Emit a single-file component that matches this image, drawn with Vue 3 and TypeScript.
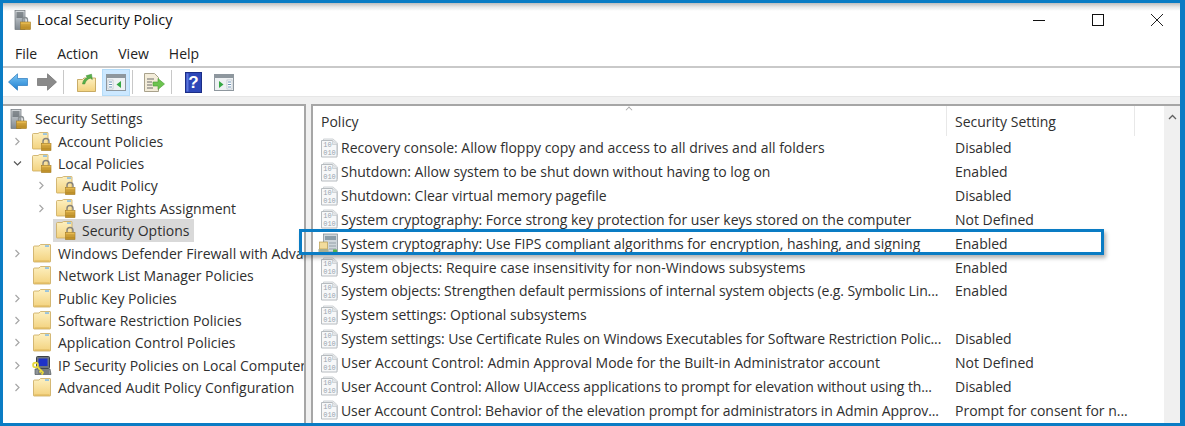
<script setup lang="ts">
interface TreeRow { label: string; level: number; icon: string; chevron: string; selected?: boolean }
const tree: TreeRow[] = [
  { label: 'Security Settings', level: 0, icon: 'server', chevron: '' },
  { label: 'Account Policies', level: 1, icon: 'lock', chevron: 'right' },
  { label: 'Local Policies', level: 1, icon: 'lock', chevron: 'down' },
  { label: 'Audit Policy', level: 2, icon: 'lock', chevron: 'right' },
  { label: 'User Rights Assignment', level: 2, icon: 'lock', chevron: 'right' },
  { label: 'Security Options', level: 2, icon: 'lock', chevron: '', selected: true },
  { label: 'Windows Defender Firewall with Advanced Security', level: 1, icon: 'folder', chevron: 'right' },
  { label: 'Network List Manager Policies', level: 1, icon: 'folder', chevron: '' },
  { label: 'Public Key Policies', level: 1, icon: 'folder', chevron: 'right' },
  { label: 'Software Restriction Policies', level: 1, icon: 'folder', chevron: 'right' },
  { label: 'Application Control Policies', level: 1, icon: 'folder', chevron: 'right' },
  { label: 'IP Security Policies on Local Computer', level: 1, icon: 'ip', chevron: 'right' },
  { label: 'Advanced Audit Policy Configuration', level: 1, icon: 'folder', chevron: 'right' }
]
const rows: { p: string; s: string; icon?: string; long?: boolean }[] = [
  { p: 'Recovery console: Allow floppy copy and access to all drives and all folders', s: 'Disabled' },
  { p: 'Shutdown: Allow system to be shut down without having to log on', s: 'Enabled' },
  { p: 'Shutdown: Clear virtual memory pagefile', s: 'Disabled' },
  { p: 'System cryptography: Force strong key protection for user keys stored on the computer', s: 'Not Defined' },
  { p: 'System cryptography: Use FIPS compliant algorithms for encryption, hashing, and signing', s: 'Enabled', icon: 'srv' },
  { p: 'System objects: Require case insensitivity for non-Windows subsystems', s: 'Enabled' },
  { p: 'System objects: Strengthen default permissions of internal system objects (e.g. Symbolic Lin...', s: 'Enabled', long: true },
  { p: 'System settings: Optional subsystems', s: '' },
  { p: 'System settings: Use Certificate Rules on Windows Executables for Software Restriction Polic...', s: 'Disabled', long: true },
  { p: 'User Account Control: Admin Approval Mode for the Built-in Administrator account', s: 'Not Defined' },
  { p: 'User Account Control: Allow UIAccess applications to prompt for elevation without using th...', s: 'Disabled', long: true },
  { p: 'User Account Control: Behavior of the elevation prompt for administrators in Admin Approv...', s: 'Prompt for consent for n...', long: true }
]
</script>

<template>
  <div class="win">
    <svg width="0" height="0" class="defs">
      <defs>
        <linearGradient id="fold" x1="0" y1="0" x2="0" y2="1">
          <stop offset="0" stop-color="#fdf0c0" />
          <stop offset="1" stop-color="#f3d27e" />
        </linearGradient>
        <linearGradient id="gold" x1="0" y1="0" x2="0" y2="1">
          <stop offset="0" stop-color="#eec258" />
          <stop offset="1" stop-color="#b98a22" />
        </linearGradient>
        <linearGradient id="steel" x1="0" y1="0" x2="0" y2="1">
          <stop offset="0" stop-color="#d5d9dc" />
          <stop offset="1" stop-color="#7f8890" />
        </linearGradient>
        <linearGradient id="blueA" x1="0" y1="0" x2="0" y2="1">
          <stop offset="0" stop-color="#7cc7f5" />
          <stop offset="1" stop-color="#1f7fd0" />
        </linearGradient>
        <symbol id="i-server" viewBox="0 0 18 20">
          <rect x="1" y="0.5" width="10" height="19" fill="url(#steel)" stroke="#6d747a" stroke-width=".7" />
          <path d="M2.5 3h7M2.5 5h7M2.5 7h7" stroke="#3f464c" stroke-width="1" />
          <path d="M8.5 12V10a2.5 2.5 0 0 1 5 0v2" fill="none" stroke="#8a8f92" stroke-width="1.4" />
          <rect x="6.5" y="12" width="10" height="7.5" fill="url(#gold)" stroke="#a47b1e" stroke-width=".6" />
          <path d="M7 15h9M7 17h9" stroke="#a47b1e" stroke-width=".5" />
        </symbol>
        <symbol id="i-folder" viewBox="0 0 20 19">
          <path d="M1.500 3A1 1 0 0 1 2.500 2H7l1.500-1.500h9.500a.5.5 0 0 1 .5.5v16.500a.5.5 0 0 1-.5.5H2a.5.5 0 0 1-.5-.5z" fill="url(#fold)" stroke="#c9a85c" stroke-width=".8" />
          <rect x="13" y="1.300" width="4" height="1.500" fill="#7fb9e6" />
          <path d="M2.500 17h15" stroke="#dcb45a" stroke-width="1" />
        </symbol>
        <symbol id="i-lock" viewBox="0 0 20 19">
          <path d="M.5 2.500A1 1 0 0 1 1.500 1.500H6l1.500-1h8a.5.5 0 0 1 .5.5v15.500a.5.5 0 0 1-.5.5H1a.5.5 0 0 1-.5-.5z" fill="url(#fold)" stroke="#c9a85c" stroke-width=".8" />
          <rect x="11" y="1.300" width="4" height="1.500" fill="#7fb9e6" />
          <path d="M11 11.500V9.500a3 3 0 0 1 6 0v2" fill="none" stroke="#85827a" stroke-width="1.400" />
          <rect x="9.500" y="11.500" width="9.500" height="7" fill="url(#gold)" stroke="#a47b1e" stroke-width=".6" />
          <path d="M10 14h8.500M10 16.200h8.500" stroke="#a47b1e" stroke-width=".5" />
        </symbol>
        <symbol id="i-ip" viewBox="0 0 20 19">
          <rect x="4.500" y="0.500" width="13" height="12" rx="1" fill="#6f767c" stroke="#3d4246" />
          <rect x="6.500" y="2.500" width="9" height="7.500" fill="#1f32c8" />
          <path d="M3 13h15l1 5.500H3z" fill="#8e9499" stroke="#50565a" stroke-width=".7" />
          <path d="M6 15h11M6 17h11" stroke="#50565a" stroke-width=".8" />
          <circle cx="3.500" cy="9" r="2.400" fill="none" stroke="#e8d83c" stroke-width="1.800" />
          <path d="M5 10.500l6.500 6.500M9 15l-1.500 1.500M11 17l-1.500 1.500" stroke="#e8d83c" stroke-width="1.800" fill="none" />
        </symbol>
        <symbol id="i-doc" viewBox="0 0 18 20">
          <path d="M2.500 2.500V1h9.500l4.500 4v12h-1.500" fill="#f0f2f4" stroke="#cfd3d6" />
          <path d="M.5 2.500h11l4.500 4v12.500H.5z" fill="#f7f8f9" stroke="#b7bcc0" />
          <path d="M11.500 2.500v4h4.500" fill="#e4e7ea" stroke="#c3c7cb" stroke-width=".7" />
          <text x="2.200" y="9" class="bits">10</text>
          <text x="2.200" y="16.500" class="bits">010</text>
        </symbol>
        <symbol id="i-srv" viewBox="0 0 20 20">
          <rect x="5.500" y="1" width="14" height="18" fill="#cfd6db" stroke="#7e878d" stroke-width=".7" />
          <path d="M7 4h11M7 6h11" stroke="#4c6678" stroke-width="1.200" />
          <path d="M11 10h7M11 13h7M11 16h7" stroke="#94a0a8" stroke-width="1" />
          <rect x="1.500" y="9" width="8" height="7" fill="#f3dc9c" stroke="#b1923f" stroke-width=".6" />
          <rect x="0.500" y="16" width="10" height="3.500" fill="#a9ae90" />
          <rect x="15" y="16.500" width="4" height="2.500" fill="#56b04d" />
        </symbol>
      </defs>
    </svg>

    <header class="title-bar">
      <svg class="title-icon" width="18" height="20"><use href="#i-server" /></svg>
      <span class="title">Local Security Policy</span>
      <div class="controls">
        <svg width="14" height="14" viewBox="0 0 14 14"><path d="M1 7.500h12" stroke="#111" /></svg>
        <svg width="14" height="14" viewBox="0 0 14 14"><rect x="1.500" y="1.500" width="11" height="11" fill="none" stroke="#111" /></svg>
        <svg width="14" height="14" viewBox="0 0 14 14"><path d="M1 1l12 12M13 1L1 13" stroke="#222" /></svg>
      </div>
    </header>

    <nav class="menu">
      <span>File</span><span>Action</span><span>View</span><span>Help</span>
    </nav>

    <div class="toolbar">
      <svg width="20" height="18" viewBox="0 0 20 18"><path d="M.5 9L9.500 .8v4.700h10v7h-10v4.700z" fill="url(#blueA)" stroke="#2a78bd" stroke-width=".7" /></svg>
      <svg class="t-fwd" width="20" height="18" viewBox="0 0 20 18"><path d="M19.500 9L10.500 .8v4.700h-10v7h10v4.700z" fill="#8a8a8a" stroke="#6f6f6f" stroke-width=".7" /></svg>
      <i class="sep s1"></i>
      <svg class="t-up" width="19" height="19" viewBox="0 0 19 19">
        <path d="M.5 6.500h5l1.500-1.500h11.500v13.500H.5z" fill="url(#fold)" stroke="#bb9a4c" stroke-width=".8" />
        <path d="M5.500 11c.5-3.500 2-5.500 5-6.500L9 2.800l5.500-1.600.8 5.300-2-1.500c-2.500 1-5 3-5.500 6z" fill="#58b04a" stroke="#3c8a33" stroke-width=".5" />
      </svg>
      <span class="t-selected">
        <svg width="20" height="17" viewBox="0 0 20 17">
          <rect x=".5" y=".5" width="19" height="16" fill="#eef1f3" stroke="#8e979e" />
          <rect x="1" y="1" width="18" height="3" fill="#8e979e" />
          <rect x="2" y="6" width="5" height="9" fill="#fff" stroke="#a8b4be" stroke-width=".6" />
          <path d="M3 8h3M3 10.500h3M3 13h3" stroke="#6f93b5" />
          <path d="M15 7v7l-4.500-3.500z" fill="#35a843" />
        </svg>
      </span>
      <i class="sep s2"></i>
      <svg class="t-exp" width="21" height="19" viewBox="0 0 21 19">
        <path d="M.5.500h10l4 4v14H.5z" fill="#f3ecd9" stroke="#a9a28c" />
        <path d="M3 6h7M3 9h5M3 12h5M3 15h6" stroke="#6c6c6c" />
        <path d="M9 9h5V5.500l6.500 5.500-6.500 5.500V13H9z" fill="#6cc44f" stroke="#4a9b35" stroke-width=".6" />
      </svg>
      <i class="sep s3"></i>
      <svg class="t-help" width="17" height="21" viewBox="0 0 17 21">
        <rect x=".5" y=".5" width="16" height="20" fill="#2d47b8" stroke="#1b2d86" />
        <rect x="1.500" y="1.500" width="2" height="18" fill="#5c76dc" />
        <text x="8.500" y="16" class="q">?</text>
      </svg>
      <svg class="t-act" width="20" height="17" viewBox="0 0 20 17">
        <rect x=".5" y=".5" width="19" height="16" fill="#eef1f3" stroke="#8e979e" />
        <rect x="1" y="1" width="18" height="3" fill="#8e979e" />
        <rect x="13" y="6" width="5" height="9" fill="#fff" stroke="#a8b4be" stroke-width=".6" />
        <path d="M14 8h3M14 10.500h3M14 13h3" stroke="#6f93b5" />
        <path d="M5 7v7l4.500-3.500z" fill="#35a843" />
      </svg>
    </div>

    <div class="strip"></div>

    <main class="panes">
      <section class="tree">
        <div v-for="r in tree" :key="r.label" class="t-row" :class="'lv' + r.level">
          <span class="chev">
            <svg v-if="r.chevron === 'right'" width="7" height="9" viewBox="0 0 7 9"><path d="M1.500 1l3.500 3.500L1.500 8" fill="none" stroke="#a6a6a6" stroke-width="1.200" /></svg>
            <svg v-else-if="r.chevron === 'down'" width="9" height="7" viewBox="0 0 9 7"><path d="M1 1.500l3.500 3.500L8 1.500" fill="none" stroke="#555" stroke-width="1.200" /></svg>
          </span>
          <span class="t-item" :class="{ sel: r.selected }">
            <svg class="t-icon" width="20" height="19"><use :href="'#i-' + r.icon" /></svg>
            <span class="t-label">{{ r.label }}</span>
          </span>
        </div>
      </section>

      <section class="list">
        <div class="cols">
          <div class="head">
            <span class="caret"></span>
            <div class="h1">Policy</div>
            <div class="h2">Security Setting</div>
            <div class="h3"></div>
          </div>
          <div v-for="r in rows" :key="r.p" class="row">
            <svg class="r-icon" :class="{ srv: r.icon }" width="18" height="20"><use :href="'#i-' + (r.icon || 'doc')" /></svg>
            <span class="r-p" :class="{ long: r.long }">{{ r.p }}</span>
            <span class="r-s">{{ r.s }}</span>
          </div>
        </div>
        <div class="scroll">
          <svg width="9" height="6" viewBox="0 0 9 6"><path d="M1 5l3.500-3.500L8 5" fill="none" stroke="#606060" stroke-width="1.300" /></svg>
        </div>
      </section>
    </main>

    <div class="callout"></div>
  </div>
</template>

<style scoped>
.win {
  position: relative;
  width: 1185px;
  height: 426px;
  box-sizing: border-box;
  border: 3px solid #0a7cc4;
  border-right-width: 5px;
  background: #fff;
  display: flex;
  flex-direction: column;
  overflow: hidden;
  font-family: "Open Sans", "Noto Sans", sans-serif;
  color: #2f2f2f;
  font-size: 14px;
}
.defs { position: absolute; }
.title-bar {
  height: 37px;
  flex: none;
  display: flex;
  align-items: center;
  background: linear-gradient(#bdbdbd 0, #e8e8e8 4px, #fff 8px);
  padding: 0 0 4px 11px;
  box-sizing: border-box;
}
.title-icon { margin-right: 5px; margin-top: 1px; }
.title { font-size: 14.500px; color: #111; }
.controls {
  margin-left: auto;
  display: flex;
  gap: 45px;
  padding-right: 16px;
}
.menu {
  height: 26px;
  flex: none;
  display: flex;
  gap: 20px;
  align-items: center;
  padding-left: 12px;
  border-bottom: 2px solid #c9c9c9;
  color: #222;
  font-size: 14px;
}
.toolbar {
  height: 28px;
  flex: none;
  display: flex;
  align-items: center;
  padding-left: 5px;
}
.t-fwd { margin-left: 9px; }
.sep { width: 1px; height: 24px; background: #c8c8c8; display: block; }
.s1 { margin-left: 6px; }
.t-up { margin-left: 13px; }
.t-selected {
  margin-left: 6px;
  width: 28px;
  height: 27px;
  background: #cce8ff;
  border: 1px solid #b5dcf8;
  box-sizing: border-box;
  display: flex;
  align-items: center;
  justify-content: center;
}
.s2 { margin-left: 2px; }
.t-exp { margin-left: 11px; }
.s3 { margin-left: 6px; }
.t-help { margin-left: 13px; }
.t-act { margin-left: 12px; }
.strip {
  height: 8px;
  flex: none;
  background: #f0f0f0;
  border-top: 1px solid #e6e6e6;
  box-sizing: border-box;
}
.panes {
  flex: 1;
  min-height: 0;
  display: flex;
  background: #f0f0f0;
}
.tree {
  width: 303px;
  flex: none;
  background: #fff;
  border-top: 2px solid #a6a6a6;
  border-right: 2px solid #a6a6a6;
  box-sizing: border-box;
  overflow: hidden;
  padding-top: 1.400px;
}
.t-row {
  height: 22.450px;
  display: flex;
  align-items: center;
  white-space: nowrap;
}
.chev {
  width: 9px;
  display: flex;
  align-items: center;
  justify-content: center;
  flex: none;
  margin-right: 10px;
}
.lv0 .chev { display: none; }
.lv0 { padding-left: 7px; }
.lv0 .t-icon { width: 18px; height: 20px; margin-right: 7px; }
.lv1 { padding-left: 10px; }
.lv2 { padding-left: 34px; }
.t-item {
  display: flex;
  align-items: center;
  height: 23px;
  margin-left: -3px;
  padding: 0 5px 0 3px;
}
.t-item.sel { background: #d9d9d9; }
.t-icon { flex: none; margin-right: 6px; }
.t-label { line-height: 19px; }
.list {
  flex: 1;
  display: flex;
  background: #fff;
  margin-left: 5px;
  border-top: 2px solid #a6a6a6;
  border-left: 2px solid #a6a6a6;
  min-width: 0;
}
.cols { flex: 1; min-width: 0; }
.head {
  position: relative;
  display: flex;
  height: 30px;
  align-items: center;
}
.caret {
  position: absolute;
  left: 313px;
  top: 1px;
  width: 5px;
  height: 5px;
  border-left: 1px solid #a8a8a8;
  border-top: 1px solid #a8a8a8;
  transform: rotate(45deg) scale(.8);
}
.h1 { width: 634px; padding-left: 8px; box-sizing: border-box; border-right: 1px solid #e8e8e8; height: 100%; line-height: 32px; }
.h2 { width: 188px; padding-left: 8px; box-sizing: border-box; border-right: 1px solid #e8e8e8; height: 100%; line-height: 32px; }
.row {
  height: 23.850px;
  display: flex;
  align-items: center;
  white-space: nowrap;
  padding-left: 8px;
}
.r-icon { flex: none; margin-right: 2px; }
.r-icon.srv { width: 20px; margin-left: -3px; margin-right: 3px; }
.r-p { width: 614px; flex: none; overflow: hidden; }
.r-p.long { letter-spacing: -.11px; }
.scroll {
  width: 16px;
  flex: none;
  background: #f0f0f0;
  display: flex;
  justify-content: center;
  padding-top: 8px;
  box-sizing: border-box;
}
.scroll svg { display: block; }
.callout {
  position: absolute;
  left: 296px;
  top: 226px;
  width: 805px;
  height: 26px;
  box-sizing: border-box;
  border: 3px solid #0a7cc4;
  box-shadow: 2px 3px 4px rgba(0, 0, 0, .3);
}
.bits { font: 400 7px "Liberation Mono", monospace; fill: #98a4ae; }
.q { font: 700 17px "Liberation Sans", sans-serif; fill: #fff; text-anchor: middle; }
</style>
